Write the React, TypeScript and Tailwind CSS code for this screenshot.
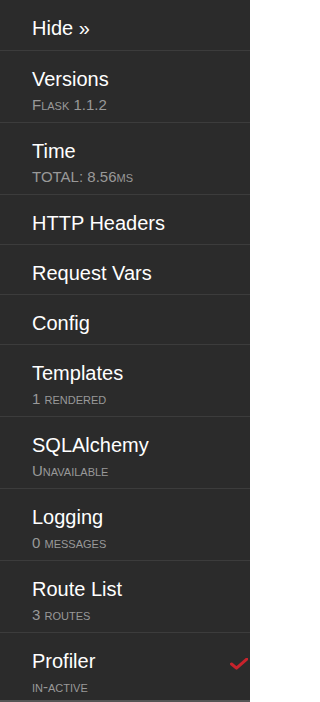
import React from 'react';

type Panel = {
  title: string;
  subtitle?: string;
  checked?: boolean;
};

const panels: Panel[] = [
  { title: 'Versions', subtitle: 'Flask 1.1.2' },
  { title: 'Time', subtitle: 'TOTAL: 8.56ms' },
  { title: 'HTTP Headers' },
  { title: 'Request Vars' },
  { title: 'Config' },
  { title: 'Templates', subtitle: '1 rendered' },
  { title: 'SQLAlchemy', subtitle: 'Unavailable' },
  { title: 'Logging', subtitle: '0 messages' },
  { title: 'Route List', subtitle: '3 routes' },
  { title: 'Profiler', subtitle: 'in-active', checked: true },
];

function Tick() {
  return (
    <svg width="18" height="12" viewBox="0 0 18 12" className="mt-[4px]">
      <path d="M1.5 6 L6.5 10.2 L16.8 1.2" fill="none" stroke="#c8232c" strokeWidth="3" strokeLinecap="round" strokeLinejoin="round" />
    </svg>
  );
}

export default function App() {
  return (
    <div
      className="w-[250px] h-[702px] overflow-hidden bg-[#2b2b2b] text-white"
      style={{ fontFamily: '"Liberation Sans", Arial, sans-serif' }}
    >
      <ul>
        {/* Hide link */}
        <li className="h-[51px] border-b border-[#3c3c3c]">
          <a className="block pt-[17px] pl-[32px] text-[20px] leading-[23px] text-white">Hide »</a>
        </li>

        {panels.map((p, i) => {
          const last = i === panels.length - 1;
          return (
            <li
              key={p.title}
              className={
                last
                  ? 'h-[67px]'
                  : p.subtitle
                    ? 'h-[72px] border-b border-[#3c3c3c]'
                    : 'h-[50px] border-b border-[#3c3c3c]'
              }
            >
              <a className="block pt-[17px] pl-[32px] pr-[2px]">
                <div className="flex items-center justify-between">
                  <span className="text-[20px] leading-[23px] text-white">{p.title}</span>
                  {p.checked && <Tick />}
                </div>
                {p.subtitle && (
                  <div className="text-[15px] leading-[28px] text-[#999999] [font-variant:small-caps]">
                    {p.subtitle}
                  </div>
                )}
              </a>
            </li>
          );
        })}
      </ul>
      <div className="h-[2px] bg-[#555555]" />
    </div>
  );
}
